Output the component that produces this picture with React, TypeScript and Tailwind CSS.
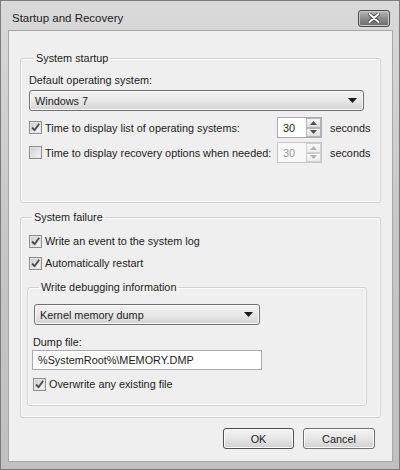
import type { ReactNode } from "react";

const FONT = "font-['Liberation_Sans',Arial,sans-serif]";

function CheckBox({ checked }: { checked?: boolean }) {
  return (
    <span className="flex h-[13px] w-[13px] shrink-0 items-center justify-center border border-[#8f8f8f] bg-[#f4f4f4]">
      <span className="relative flex h-[11px] w-[11px] items-center justify-center border border-[#e2e2e2] bg-gradient-to-br from-[#cfcfcf] to-[#f7f7f7]">
        {checked && (
          <svg width="11" height="11" viewBox="0 0 11 11" className="absolute -top-px -left-px">
            <path d="M2 5.5 L4.5 8.2 L9.2 1.8" fill="none" stroke="#4b4b4b" strokeWidth="1.9" strokeLinejoin="round" />
          </svg>
        )}
      </span>
    </span>
  );
}

function CheckRow({ checked, children }: { checked?: boolean; children: ReactNode }) {
  return (
    <div className="flex h-[16px] items-center gap-[3px]">
      <CheckBox checked={checked} />
      <span className="whitespace-nowrap">{children}</span>
    </div>
  );
}

function Caret() {
  return (
    <svg width="9" height="5" viewBox="0 0 9 5">
      <path d="M0 0 H9 L4.5 5 Z" fill="#1a1a1a" />
    </svg>
  );
}

function Combo({ value, width }: { value: string; width: string }) {
  return (
    <div
      className={`flex h-[21px] ${width} items-center justify-between rounded-[3px] border border-[#707070] bg-gradient-to-b from-[#f3f3f3] via-[#e8e8e8] to-[#d3d3d3] pr-[6px] pl-[5px] shadow-[inset_0_0_0_1px_#fafafa]`}
    >
      <span>{value}</span>
      <Caret />
    </div>
  );
}

function Arrow({ up, disabled }: { up?: boolean; disabled?: boolean }) {
  return (
    <div
      className={`flex flex-1 items-center justify-center border bg-gradient-to-b ${disabled ? "border-[#cfcfcf] from-[#fafafa] to-[#ececec]" : "border-[#b5b5b5] from-[#f6f6f6] to-[#dedede]"}`}
    >
      <svg width="7" height="4" viewBox="0 0 7 4">
        <path d={up ? "M0 4 H7 L3.5 0 Z" : "M0 0 H7 L3.5 4 Z"} fill={disabled ? "#b4b4b4" : "#505050"} />
      </svg>
    </div>
  );
}

function Spin({ disabled }: { disabled?: boolean }) {
  return (
    <div
      className={`flex h-[21px] w-[45px] shrink-0 border ${disabled ? "border-[#c6c6c6] bg-[#f8f8f8] text-[#9a9a9a]" : "border-[#a9abb0] bg-white"}`}
    >
      <div className="flex flex-1 items-center pl-[5px]">30</div>
      <div className="flex w-[15px] flex-col">
        <Arrow up disabled={disabled} />
        <Arrow disabled={disabled} />
      </div>
    </div>
  );
}

function Group({ title, className, children }: { title: string; className?: string; children: ReactNode }) {
  return (
    <fieldset className={`min-w-0 rounded-[3px] border border-[#d2d2d2] shadow-[inset_0_0_0_1px_#fbfbfb] ${className ?? ""}`}>
      <legend className="ml-[5px] px-[2px] leading-[14px]">{title}</legend>
      {children}
    </fieldset>
  );
}

function Button({ label, isDefault }: { label: string; isDefault?: boolean }) {
  return (
    <div
      className={`flex h-[21px] items-center justify-center rounded-[3px] border bg-gradient-to-b from-[#f4f4f4] via-[#e6e6e6] to-[#d0d0d0] shadow-[inset_0_0_0_1px_#fbfbfb] ${isDefault ? "w-[71px] border-[#4e4e4e]" : "w-[72px] border-[#707070]"}`}
    >
      {label}
    </div>
  );
}

export default function App() {
  return (
    <div
      className={`flex h-[470px] w-[400px] flex-col border border-[#7c7c7c] bg-gradient-to-b from-[#d9d9d9] via-[#c6c6c6] to-[#c0c0c0] text-[10.85px] leading-[14px] text-[#1c1c1c] ${FONT}`}
    >
      <header className="flex h-[29px] shrink-0 items-center justify-between pt-[5px] pr-[9px] pl-[11px]">
        <span className="text-[11.5px] text-[#222]">Startup and Recovery</span>
        <div className="flex h-[17px] w-[32px] items-center justify-center rounded-[3px] border border-[#4c4c4c] bg-gradient-to-b from-[#b8b8b8] via-[#8c8c8c] to-[#6c6c6c] shadow-[inset_0_0_0_1px_#c9c9c9]">
          <svg width="12" height="10" viewBox="0 0 12 10">
            <path d="M1.5 1 L10.5 9 M10.5 1 L1.5 9" stroke="#3a3a3a" strokeWidth="3.6" strokeLinecap="round" />
            <path d="M1.5 1 L10.5 9 M10.5 1 L1.5 9" stroke="#ffffff" strokeWidth="2" strokeLinecap="round" />
          </svg>
        </div>
      </header>

      <main className="mr-[6px] mb-[7px] ml-[7px] flex min-h-0 flex-1 flex-col border border-[#a6a6a6] bg-[#efefef] px-[11px]">
        <Group title="System startup" className="mt-[20px] pr-[11px] pb-[39px] pl-[8px]">
          <div className="pt-[8px]">Default operating system:</div>
          <div className="mt-[3px]">
            <Combo value="Windows 7" width="w-[335px]" />
          </div>
          <div className="mt-[6px] flex h-[21px] items-center">
            <CheckRow checked>Time to display list of operating systems:</CheckRow>
            <div className="ml-auto flex items-center gap-[8px]">
              <Spin />
              <span className="w-[39px]">seconds</span>
            </div>
          </div>
          <div className="mt-[4px] flex h-[21px] items-center">
            <CheckRow>Time to display recovery options when needed:</CheckRow>
            <div className="ml-auto flex items-center gap-[8px]">
              <Spin disabled />
              <span className="w-[39px]">seconds</span>
            </div>
          </div>
        </Group>

        <Group title="System failure" className="mt-[7px] pr-[13px] pb-[11px] pl-[6px]">
          <div className="ml-[2px] pt-[9px]">
            <CheckRow checked>Write an event to the system log</CheckRow>
          </div>
          <div className="mt-[6px] ml-[2px]">
            <CheckRow checked>Automatically restart</CheckRow>
          </div>
          <Group title="Write debugging information" className="mt-[9px] pb-[13px] pl-[6px]">
            <div className="pt-[10px]">
              <Combo value="Kernel memory dump" width="w-[226px]" />
            </div>
            <div className="mt-[10px] ml-[-1px]">Dump file:</div>
            <div className="mt-[1px] ml-[-2px] flex h-[20px] w-[230px] items-center border border-[#a9abb0] bg-white pl-[5px]">
              %SystemRoot%\MEMORY.DMP
            </div>
            <div className="mt-[6px] ml-[-1px]">
              <CheckRow checked>Overwrite any existing file</CheckRow>
            </div>
          </Group>
        </Group>

        <div className="mt-[10px] mr-[6px] flex justify-end gap-[9px]">
          <Button label="OK" isDefault />
          <Button label="Cancel" />
        </div>
      </main>
    </div>
  );
}
